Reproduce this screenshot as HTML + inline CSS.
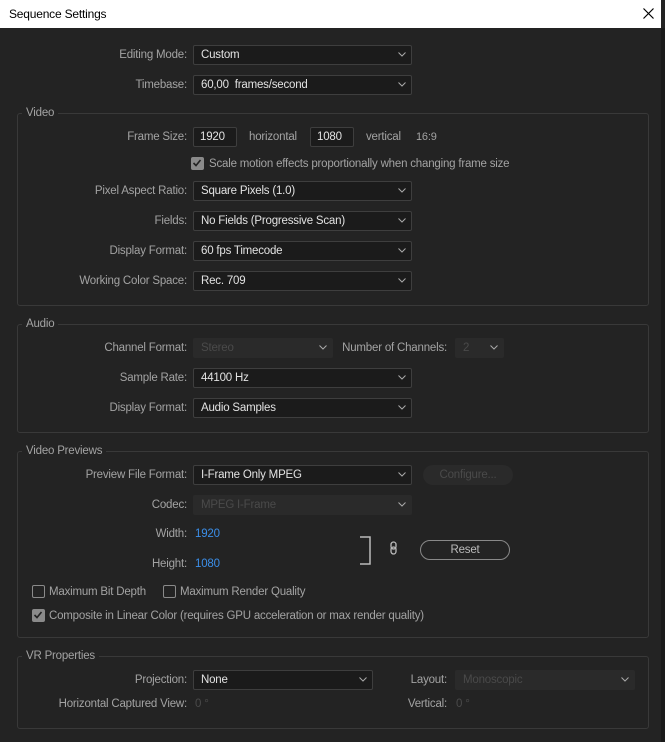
<!DOCTYPE html>
<html><head><meta charset="utf-8"><style>
*{box-sizing:border-box;margin:0;padding:0}
body{width:665px;height:742px;background:#232323;font-family:"Liberation Sans",sans-serif;font-size:11.5px;position:relative;overflow:hidden;letter-spacing:-0.2px}
.a{position:absolute;white-space:nowrap}
.title{left:0;top:0;width:661px;height:28px;background:#fff}
.lab{color:#a3a3a3;text-align:right;line-height:20px}
.dd{position:absolute;height:20px;background:#1b1b1b;border:1px solid #3e3e3e;border-radius:2px;color:#e2e2e2;line-height:18px;padding-left:7px}
.dd.dis{background:#2a2a2a;border-color:#2a2a2a;color:#4a4a4a}
.dd svg{position:absolute;right:5px;top:6px}
.grp{position:absolute;border:1px solid #393939;border-radius:3px}
.leg{position:absolute;background:#232323;color:#a3a3a3;padding:0 4px;line-height:14px}
.inp{position:absolute;height:20px;background:#1b1b1b;border:1px solid #3e3e3e;border-radius:2px;color:#e2e2e2;line-height:18px;padding-left:6px}
.cb{position:absolute;width:13px;height:13px;border:1.5px solid #8a8a8a;border-radius:2px}
.cb.on{background:#8a8a8a;border-color:#8a8a8a}
.txt{color:#a3a3a3;line-height:14px}
.blue{color:#3b8ee8}
#w{position:absolute;left:0;top:1px;width:665px;height:741px}
</style></head><body>
<div class="a title"></div>
<div class="a" style="left:9px;top:7px;color:#000;font-size:12px">Sequence Settings</div>
<svg class="a" style="left:643px;top:8px" width="11" height="11"><path d="M0.5 0.5L10.5 10.5M10.5 0.5L0.5 10.5" stroke="#000" stroke-width="1.2"/></svg>
<div class="a" style="left:661px;top:28px;width:4px;height:714px;background:#1a1a1a"></div>

<svg width="0" height="0" style="position:absolute"><defs><path id="ch" d="M0.5 0.5L4 4L7.5 0.5" stroke="#aaa" fill="none" stroke-width="1"/></defs></svg>
<div id="w">
<div class="a lab" style="right:478px;top:44px">Editing Mode:</div>
<div class="dd" style="left:193px;top:44px;width:219px">Custom<svg width="8" height="5"><use href="#ch"/></svg></div>
<div class="a lab" style="right:478px;top:74px">Timebase:</div>
<div class="dd" style="left:193px;top:74px;width:219px">60,00&nbsp; frames/second<svg width="8" height="5"><use href="#ch"/></svg></div>

<div class="grp" style="left:17px;top:112px;width:632px;height:193px"></div>
<div class="leg a" style="left:22px;top:105px">Video</div>
<div class="a lab" style="right:478px;top:126px">Frame Size:</div>
<div class="inp" style="left:193px;top:126px;width:44px">1920</div>
<div class="a lab" style="left:249px;top:126px">horizontal</div>
<div class="inp" style="left:310px;top:126px;width:44px">1080</div>
<div class="a lab" style="left:366px;top:126px">vertical</div>
<div class="a lab" style="left:416px;top:126px;font-size:11px">16:9</div>
<div class="cb on" style="left:191px;top:156px"><svg width="10" height="10" style="position:absolute;left:0;top:0"><path d="M1.5 5L4 7.5L8.5 2" stroke="#222" stroke-width="1.6" fill="none"/></svg></div>
<div class="a txt" style="left:209px;top:156px">Scale motion effects proportionally when changing frame size</div>
<div class="a lab" style="right:478px;top:180px">Pixel Aspect Ratio:</div>
<div class="dd" style="left:193px;top:180px;width:219px">Square Pixels (1.0)<svg width="8" height="5"><use href="#ch"/></svg></div>
<div class="a lab" style="right:478px;top:210px">Fields:</div>
<div class="dd" style="left:193px;top:210px;width:219px">No Fields (Progressive Scan)<svg width="8" height="5"><use href="#ch"/></svg></div>
<div class="a lab" style="right:478px;top:240px">Display Format:</div>
<div class="dd" style="left:193px;top:240px;width:219px">60 fps Timecode<svg width="8" height="5"><use href="#ch"/></svg></div>
<div class="a lab" style="right:478px;top:270px">Working Color Space:</div>
<div class="dd" style="left:193px;top:270px;width:219px">Rec. 709<svg width="8" height="5"><use href="#ch"/></svg></div>

<div class="grp" style="left:17px;top:323px;width:632px;height:109px"></div>
<div class="leg a" style="left:22px;top:316px">Audio</div>
<div class="a lab" style="right:478px;top:337px">Channel Format:</div>
<div class="dd dis" style="left:193px;top:337px;width:140px">Stereo<svg width="8" height="5"><use href="#ch"/></svg></div>
<div class="a lab" style="right:218px;top:337px">Number of Channels:</div>
<div class="dd dis" style="left:455px;top:337px;width:49px">2<svg width="8" height="5"><use href="#ch"/></svg></div>
<div class="a lab" style="right:478px;top:367px">Sample Rate:</div>
<div class="dd" style="left:193px;top:367px;width:219px">44100 Hz<svg width="8" height="5"><use href="#ch"/></svg></div>
<div class="a lab" style="right:478px;top:397px">Display Format:</div>
<div class="dd" style="left:193px;top:397px;width:219px">Audio Samples<svg width="8" height="5"><use href="#ch"/></svg></div>

<div class="grp" style="left:17px;top:450px;width:632px;height:187px"></div>
<div class="leg a" style="left:22px;top:443px">Video Previews</div>
<div class="a lab" style="right:478px;top:464px">Preview File Format:</div>
<div class="dd" style="left:193px;top:464px;width:219px">I-Frame Only MPEG<svg width="8" height="5"><use href="#ch"/></svg></div>
<div class="a" style="left:423px;top:464px;width:90px;height:20px;border-radius:10px;background:#2a2a2a;color:#4a4a4a;text-align:center;line-height:20px">Configure...</div>
<div class="a lab" style="right:478px;top:494px">Codec:</div>
<div class="dd dis" style="left:193px;top:494px;width:219px">MPEG I-Frame<svg width="8" height="5"><use href="#ch"/></svg></div>
<div class="a lab" style="right:478px;top:523px">Width:</div>
<div class="a blue" style="left:195px;top:523px;line-height:20px">1920</div>
<div class="a lab" style="right:478px;top:553px">Height:</div>
<div class="a blue" style="left:195px;top:553px;line-height:20px">1080</div>
<svg class="a" style="left:360px;top:535px" width="12" height="29"><path d="M0 1H10V28H0" stroke="#bbb" stroke-width="1.5" fill="none"/></svg>
<svg class="a" style="left:390px;top:540px" width="8" height="15"><rect x="1" y="1" width="5" height="7" rx="2.5" stroke="#bbb" fill="none" stroke-width="1.3"/><rect x="1" y="6" width="5" height="7" rx="2.5" stroke="#bbb" fill="none" stroke-width="1.3"/></svg>
<div class="a" style="left:420px;top:539px;width:90px;height:20px;border-radius:10px;border:1px solid #888;color:#bbb;text-align:center;line-height:18px">Reset</div>
<div class="cb" style="left:32px;top:584px"></div>
<div class="a txt" style="left:49px;top:584px">Maximum Bit Depth</div>
<div class="cb" style="left:163px;top:584px"></div>
<div class="a txt" style="left:180px;top:584px">Maximum Render Quality</div>
<div class="cb on" style="left:32px;top:608px"><svg width="10" height="10" style="position:absolute;left:0;top:0"><path d="M1.5 5L4 7.5L8.5 2" stroke="#222" stroke-width="1.6" fill="none"/></svg></div>
<div class="a txt" style="left:49px;top:608px">Composite in Linear Color (requires GPU acceleration or max render quality)</div>

<div class="grp" style="left:17px;top:655px;width:632px;height:73px"></div>
<div class="leg a" style="left:22px;top:648px">VR Properties</div>
<div class="a lab" style="right:478px;top:669px">Projection:</div>
<div class="dd" style="left:193px;top:669px;width:180px">None<svg width="8" height="5"><use href="#ch"/></svg></div>
<div class="a lab" style="right:218px;top:669px">Layout:</div>
<div class="dd dis" style="left:455px;top:669px;width:180px">Monoscopic<svg width="8" height="5"><use href="#ch"/></svg></div>
<div class="a lab" style="right:478px;top:693px">Horizontal Captured View:</div>
<div class="a" style="left:195px;top:693px;line-height:20px;color:#4a4a4a">0 °</div>
<div class="a lab" style="right:218px;top:693px">Vertical:</div>
<div class="a" style="left:456px;top:693px;line-height:20px;color:#4a4a4a">0 °</div>
</div>
</body></html>
